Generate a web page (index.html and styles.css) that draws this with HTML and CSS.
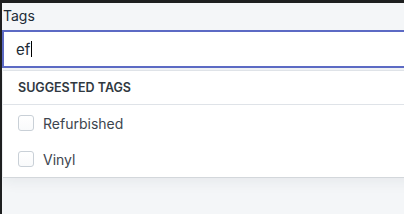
FILE: index.html
```html
<!DOCTYPE html>
<html>
<head>
<meta charset="utf-8">
<link rel="stylesheet" href="styles.css">
</head>
<body>
<div class="page">
  <div class="field">
    <label class="label">Tags</label>
    <div class="input"><span class="value">ef</span><span class="caret"></span></div>
  </div>
  <div class="popover">
    <div class="heading">Suggested tags</div>
    <ul class="options">
      <li class="option"><span class="checkbox"></span><span class="opt-label">Refurbished</span></li>
      <li class="option"><span class="checkbox"></span><span class="opt-label">Vinyl</span></li>
    </ul>
  </div>
</div>
</body>
</html>
```
FILE: styles.css
```css
html, body {
  margin: 0;
  padding: 0;
  width: 404px;
  height: 214px;
  overflow: hidden;
  background: #1e1f20;
}
.page {
  margin: 3px 0 0 2px;
  height: 211px;
  background: #f4f6f8;
  font-family: Inter, "Noto Sans", sans-serif;
  color: #212b36;
  overflow: hidden;
}
.field {
  display: flex;
  flex-direction: column;
}
.label {
  font-size: 14px;
  line-height: 20px;
  padding: 3px 0 4px 1px;
  color: #212b36;
}
.input {
  width: 440px;
  height: 34px;
  border: 2px solid #5c6ac4;
  background: #fff;
  display: flex;
  align-items: center;
  padding-left: 12px;
}
.value {
  font-size: 15px;
  color: #212b36;
}
.caret {
  width: 1px;
  height: 16px;
  background: #000;
  margin-left: 1px;
}
.popover {
  margin: 2px 0 0 1px;
  width: 440px;
  background: #fff;
  border-top: 1px solid #dfe3e8;
  box-shadow: 0 1px 0 #d3d7db, 0 4px 14px rgba(33, 43, 54, 0.07);
}
.heading {
  height: 33px;
  display: flex;
  align-items: center;
  padding-left: 15px;
  font-size: 12.5px;
  font-weight: 600;
  text-transform: uppercase;
  color: #303840;
  border-bottom: 1px solid #dfe3e8;
}
.options {
  list-style: none;
  margin: 0;
  padding: 0;
}
.option {
  height: 36px;
  display: flex;
  align-items: center;
  padding-left: 15px;
}
.checkbox {
  width: 14px;
  height: 14px;
  border: 1px solid #c9d0d7;
  border-radius: 3px;
  background: linear-gradient(#fff, #f9fafb);
}
.opt-label {
  margin-left: 9px;
  font-size: 14px;
  color: #3d454e;
}
```
